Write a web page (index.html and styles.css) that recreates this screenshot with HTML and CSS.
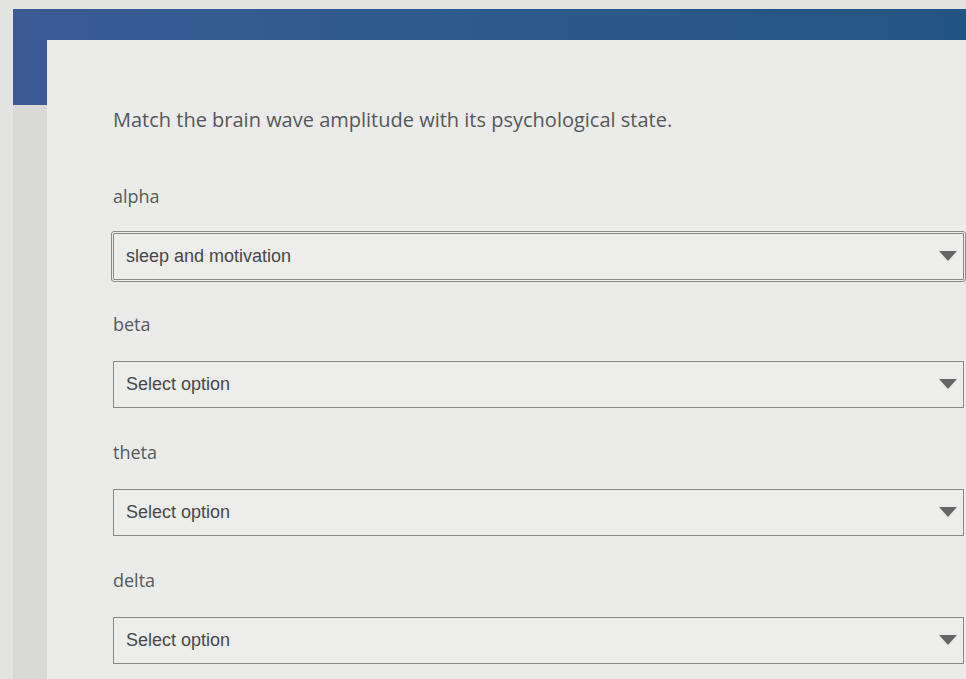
FILE: index.html
```html
<!DOCTYPE html>
<html lang="en">
<head>
<meta charset="utf-8">
<title>Matching question</title>
<link rel="stylesheet" href="styles.css">
</head>
<body>
  <div class="shell">
    <div class="stage">
      <main class="card">
        <p class="prompt">Match the brain wave amplitude with its psychological state.</p>

        <div class="pair">
          <div class="term">alpha</div>
          <div class="select is-focused" role="combobox" tabindex="0">
            <span class="select-value">sleep and motivation</span>
            <svg class="caret" viewBox="0 0 18 10" aria-hidden="true"><path d="M0 0H18L9 10Z"/></svg>
          </div>
        </div>

        <div class="pair">
          <div class="term">beta</div>
          <div class="select" role="combobox" tabindex="0">
            <span class="select-value">Select option</span>
            <svg class="caret" viewBox="0 0 18 10" aria-hidden="true"><path d="M0 0H18L9 10Z"/></svg>
          </div>
        </div>

        <div class="pair">
          <div class="term">theta</div>
          <div class="select" role="combobox" tabindex="0">
            <span class="select-value">Select option</span>
            <svg class="caret" viewBox="0 0 18 10" aria-hidden="true"><path d="M0 0H18L9 10Z"/></svg>
          </div>
        </div>

        <div class="pair">
          <div class="term">delta</div>
          <div class="select" role="combobox" tabindex="0">
            <span class="select-value">Select option</span>
            <svg class="caret" viewBox="0 0 18 10" aria-hidden="true"><path d="M0 0H18L9 10Z"/></svg>
          </div>
        </div>
      </main>
    </div>
  </div>
</body>
</html>
```

FILE: styles.css
```css
html, body {
  margin: 0;
  height: 100%;
}

body {
  background: #e3e3e2;
  overflow: hidden;
  font-family: "Open Sans", "Noto Sans", sans-serif;
}

.shell {
  padding: 9px 0 0 13px;
  height: 100%;
  box-sizing: border-box;
}

/* blue header band with the grey gutter under it on the left */
.stage {
  height: 100%;
  box-sizing: border-box;
  padding: 31px 0 0 34px;
  background:
    linear-gradient(to bottom, transparent 0 96px, #d9d9d8 96px),
    linear-gradient(to right, #3b5a96 0%, #2e5a8e 40%, #235582 100%);
}

.card {
  display: block;
  height: 100%;
  box-sizing: border-box;
  background: #ebebea;
  padding: 66px 2px 0 66px;
}

.prompt {
  margin: 0 0 50px;
  font-size: 20px;
  line-height: 28px;
  color: #545859;
}

.pair {
  display: flex;
  flex-direction: column;
  gap: 25px;
  margin-bottom: 32px;
}

.term {
  font-size: 18px;
  line-height: 24px;
  color: #555a5c;
}

.select {
  display: flex;
  align-items: center;
  justify-content: space-between;
  height: 47px;
  box-sizing: border-box;
  padding: 0 6px 1px 12px;
  border: 1px solid #878787;
  background: #ededec;
  font-family: "Liberation Sans", Arial, sans-serif;
  font-size: 18px;
  color: #474747;
}

.select.is-focused {
  outline: 1px solid #8c8c8c;
  outline-offset: 1px;
  border-radius: 1px;
}

.caret {
  width: 18px;
  height: 10px;
  fill: #676767;
}
```
